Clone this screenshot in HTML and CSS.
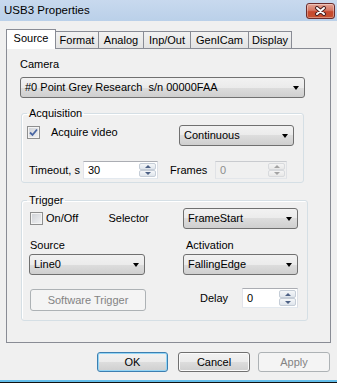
FILE: index.html
```html
<!DOCTYPE html>
<html>
<head>
	<title>USB3 Properties</title>
	<link rel="stylesheet" href="styles.css">
</head>
<body>
<div class="window">
	<div class="titlebar">
		<span class="title">USB3 Properties</span>
		<span class="close">
			<svg width="13" height="10" viewBox="0 0 13 10"><path d="M3 2 L10 8 M10 2 L3 8" stroke="#4a2222" stroke-width="4" stroke-linecap="round"/><path d="M3 2 L10 8 M10 2 L3 8" stroke="#fff" stroke-width="2" stroke-linecap="round"/></svg>
		</span>
	</div>

	<div class="client">
		<div class="tabs">
			<span class="tab selected">Source</span>
			<span class="tab t-format">Format</span>
			<span class="tab t-analog">Analog</span>
			<span class="tab t-inout">Inp/Out</span>
			<span class="tab t-genicam">GenICam</span>
			<span class="tab t-display">Display</span>
		</div>

		<div class="page">
			<div class="label">Camera</div>
			<div class="combo camera"><span>#0 Point Grey Research&nbsp; s/n 00000FAA</span><i class="arrow"></i></div>

			<fieldset class="group acq">
				<legend>Acquisition</legend>
				<div class="row first">
					<label class="check"><span class="box"><svg width="9" height="9" viewBox="0 0 9 9"><path d="M1 4.5 L3.5 7 L8 1.5" fill="none" stroke="#4866a3" stroke-width="1.8"/></svg></span><span class="gap-wide">Acquire video</span></label>
					<div class="combo mode"><span>Continuous</span><i class="arrow"></i></div>
				</div>
				<div class="row second">
					<span class="lbl timeout">Timeout, s</span>
					<div class="spin timeout-spin"><span class="val">30</span><span class="updown"><b class="up"></b><b class="down"></b></span></div>
					<span class="lbl frames">Frames</span>
					<div class="spin frames-spin disabled"><span class="val">0</span><span class="updown"><b class="up"></b><b class="down"></b></span></div>
				</div>
			</fieldset>

			<fieldset class="group trig">
				<legend>Trigger</legend>
				<div class="row ra">
					<label class="check onoff"><span class="box"></span><span>On/Off</span></label>
					<span class="lbl selector">Selector</span>
					<div class="combo mode"><span>FrameStart</span><i class="arrow"></i></div>
				</div>
				<div class="row rb">
					<span class="lbl source">Source</span>
					<span class="lbl activation">Activation</span>
				</div>
				<div class="row rc">
					<div class="combo line"><span>Line0</span><i class="arrow"></i></div>
					<div class="combo mode"><span>FallingEdge</span><i class="arrow"></i></div>
				</div>
				<div class="row rd">
					<span class="button disabled swtrig">Software Trigger</span>
					<span class="lbl delay">Delay</span>
					<div class="spin delay-spin"><span class="val">0</span><span class="updown"><b class="up"></b><b class="down"></b></span></div>
				</div>
			</fieldset>
		</div>

		<div class="actions">
			<span class="button default ok">OK</span>
			<span class="button cancel">Cancel</span>
			<span class="button disabled apply">Apply</span>
		</div>
	</div>
	<div class="frame-bottom"></div>
</div>
</body>
</html>
```

FILE: styles.css
```css
* { box-sizing: border-box; }
html, body { margin: 0; padding: 0; }
body { width: 337px; height: 383px; overflow: hidden; background: #f0f0f0; color: #000; font-family: "Liberation Sans", Arial, sans-serif; font-size: 11px; line-height: 13px; }

.window { display: flex; flex-direction: column; height: 383px; }

/* title bar */
.titlebar { height: 21px; flex: none; display: flex; align-items: center; justify-content: space-between; padding: 0 2px 0 4px; background: linear-gradient(#c8d9ee, #bad0e9); }
.title { font-size: 11.5px; color: #000; }
.close { width: 29px; height: 16px; display: flex; align-items: center; justify-content: center; border: 1px solid #6b2c2c; border-radius: 3px; background: linear-gradient(#e3a597 0%, #d57763 45%, #c7492f 55%, #c5512f 100%); box-shadow: inset 0 0 0 1px rgba(255,255,255,.35); }

/* client area */
.client { flex: 1; padding-top: 8px; background: #f0f0f0; }

.tabs { display: flex; align-items: flex-end; height: 19px; padding-left: 6px; }
.tab { height: 17px; display: flex; align-items: center; justify-content: center; border-top: 1px solid #898c95; border-right: 1px solid #898c95; background: linear-gradient(#f2f2f2, #e3e3e3); }
.tab.selected { position: relative; z-index: 1; width: 50px; height: 20px; margin-bottom: -1px; border-left: 1px solid #898c95; background: #fff; padding-bottom: 2px; }
.t-format { width: 43px; }
.t-analog { width: 45px; }
.t-inout { width: 47px; }
.t-genicam { width: 58px; }
.t-display { width: 43px; }

.page { height: 295px; margin: 0 6px; padding: 9px 0 0 13px; border: 1px solid #898c95; background: #f0f0f0; }
.label { height: 13px; }

/* combo boxes */
.combo { height: 21px; display: flex; align-items: center; justify-content: space-between; padding: 0 5px 0 4px; border: 1px solid #707070; border-radius: 3px; background: linear-gradient(#f2f2f2 0%, #ebebeb 50%, #dddddd 50%, #cfcfcf 100%); white-space: nowrap; }
.arrow { width: 0; height: 0; border-left: 3.5px solid transparent; border-right: 3.5px solid transparent; border-top: 4px solid #000; }
.combo.camera { width: 285px; margin-top: 6px; }
.combo.mode { width: 115px; margin-left: auto; }
.combo.line { width: 116px; }

/* group boxes */
.group { width: 283px; margin: 0 0 0 1px; padding: 0 9px 0 0; border: 1px solid #d5dfe5; border-radius: 3px; box-shadow: inset 1px 1px 0 #fff; }
.group legend { margin-left: 5px; padding: 0 2px; line-height: 13px; }
.acq { margin-top: 9px; padding-bottom: 3px; }
.trig { margin-top: 11px; padding-bottom: 10px; }

.row { display: flex; align-items: center; }
.acq .first { margin-top: 5px; height: 21px; align-items: flex-start; padding-left: 5px; }
.acq .first .check { margin-top: 1px; }
.acq .second { margin-top: 15px; height: 18px; padding-left: 7px; }

.trig .row { padding-left: 7px; }
.trig .ra { margin-top: 1px; height: 21px; }
.trig .rb { margin-top: 10px; height: 13px; }
.trig .rc { margin-top: 2px; height: 21px; }
.trig .rd { margin-top: 13px; height: 22px; align-items: flex-start; }

/* check boxes */
.check { display: flex; align-items: center; }
.box { width: 13px; height: 13px; display: flex; align-items: center; justify-content: center; border: 1px solid #8e8f8f; background: linear-gradient(135deg, #cdd0d5, #f3f4f5); box-shadow: inset 0 0 0 1px #f4f4f4; }
.gap-wide { margin-left: 11px; }
.onoff { margin-left: 1px; margin-top: 4px; align-self: flex-start; }
.onoff .box { margin-right: 3px; }

/* labels */
.lbl.timeout { width: 54px; }
.lbl.frames { width: 45px; margin-left: 12px; }
.lbl.selector { margin-left: auto; margin-right: 4px; }
.lbl.source { margin-left: 1px; width: 156px; }
.lbl.delay { margin-left: 54px; width: 42px; margin-top: 4px; }

/* spin edits */
.spin { height: 18px; display: flex; align-items: center; justify-content: space-between; padding: 0 1px 0 4px; border: 1px solid; border-color: #abadb3 #dbdfe6 #e3e9ef #e2e3ea; background: #fff; }
.spin.disabled { background: #f0f0f0; color: #8d8d8d; border-color: #c9cbcf #dfe1e5 #e3e6ea #e0e2e6; }
.timeout-spin { width: 75px; }
.frames-spin { width: 72px; }
.delay-spin { width: 56px; height: 20px; }
.updown { width: 17px; height: 100%; display: flex; flex-direction: column; padding: 1px 0; }
.updown b { flex: 1; display: flex; align-items: center; justify-content: center; border: 1px solid #c5cdd7; border-radius: 2px; background: linear-gradient(#f5f7f9, #dfe5ec); }
.updown b::after { content: ""; width: 0; height: 0; border-left: 3px solid transparent; border-right: 3px solid transparent; }
.updown .up::after { border-bottom: 3px solid #4d6185; }
.updown .down::after { border-top: 3px solid #4d6185; }
.disabled .updown b { border-color: #d8dadd; background: linear-gradient(#f4f4f4, #e8e8e8); }
.disabled .updown .up::after { border-bottom-color: #a3a3a3; }
.disabled .updown .down::after { border-top-color: #a3a3a3; }

/* push buttons */
.button { height: 20px; display: flex; align-items: center; justify-content: center; border: 1px solid #707070; border-radius: 3px; background: linear-gradient(#f2f2f2 0%, #ebebeb 50%, #dddddd 50%, #cfcfcf 100%); box-shadow: inset 0 0 0 1px #fbfbfb; }
.button.disabled { color: #838383; border-color: #adb2b5; background: #f4f4f4; box-shadow: none; }
.button.default { border-color: #3c7fb1; box-shadow: inset 0 0 0 1px #94d5f5; }
.swtrig { width: 116px; height: 22px; margin-left: 1px; margin-top: 1px; }

.actions { display: flex; justify-content: flex-end; margin-top: 9px; padding-right: 7px; }
.ok { width: 71px; }
.cancel { width: 72px; margin-left: 10px; }
.apply { width: 72px; margin-left: 8px; }

.frame-bottom { height: 3px; flex: none; border-top: 2px solid #63bde9; background: #111; }
```
